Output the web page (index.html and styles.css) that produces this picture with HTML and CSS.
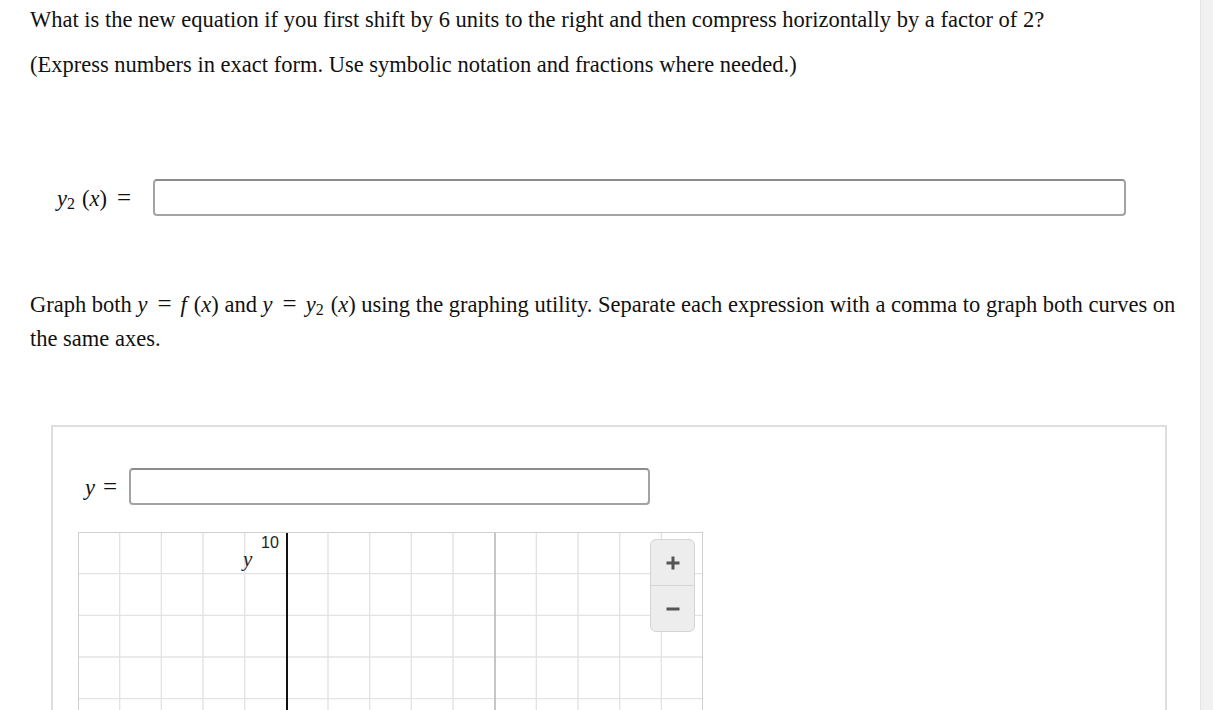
FILE: index.html
```html
<!DOCTYPE html>
<html>
<head>
<meta charset="utf-8">
<link rel="stylesheet" href="styles.css">
</head>
<body>
<div class="page">
  <main class="content">
    <p class="q1">What is the new equation if you first shift by 6 units to the right and then compress horizontally by a factor of 2?</p>
    <p class="q2">(Express numbers in exact form. Use symbolic notation and fractions where needed.)</p>

    <div class="answer-row">
      <span class="label"><i>y</i><sub>2</sub><span class="paren">(<i>x</i>)</span><span class="eq">=</span></span>
      <div class="input wide"></div>
    </div>

    <p class="graph-text">Graph both <i>y</i><span class="eq">=</span><i>f</i><span class="paren">(<i>x</i>)</span> and <i>y</i><span class="eq">=</span><i>y</i><sub>2</sub><span class="paren">(<i>x</i>)</span> using the graphing utility. Separate each expression with a comma to graph both curves on the same axes.</p>

    <section class="panel">
      <div class="y-row">
        <span class="label"><i>y</i><span class="eq">=</span></span>
        <div class="input narrow"></div>
      </div>
      <div class="graph">
        <svg class="grid" width="625" height="625" viewBox="0 0 625 625">
          <g stroke="#e3e3e3" stroke-width="1.4">
            <line x1="41.67" y1="0" x2="41.67" y2="625"/>
            <line x1="83.33" y1="0" x2="83.33" y2="625"/>
            <line x1="125" y1="0" x2="125" y2="625"/>
            <line x1="166.67" y1="0" x2="166.67" y2="625"/>
            <line x1="250" y1="0" x2="250" y2="625"/>
            <line x1="291.67" y1="0" x2="291.67" y2="625"/>
            <line x1="333.33" y1="0" x2="333.33" y2="625"/>
            <line x1="375" y1="0" x2="375" y2="625"/>
            <line x1="458.33" y1="0" x2="458.33" y2="625"/>
            <line x1="500" y1="0" x2="500" y2="625"/>
            <line x1="541.67" y1="0" x2="541.67" y2="625"/>
            <line x1="583.33" y1="0" x2="583.33" y2="625"/>
            <line x1="0" y1="41.67" x2="625" y2="41.67"/>
            <line x1="0" y1="83.33" x2="625" y2="83.33"/>
            <line x1="0" y1="125" x2="625" y2="125"/>
            <line x1="0" y1="166.67" x2="625" y2="166.67"/>
            <line x1="0" y1="208.33" x2="625" y2="208.33"/>
            <line x1="0" y1="250" x2="625" y2="250"/>
          </g>
          <line x1="417" y1="0" x2="417" y2="625" stroke="#b8b8b8" stroke-width="1.6"/>
          <line x1="209" y1="0" x2="209" y2="625" stroke="#111" stroke-width="2"/>
          <rect x="0.5" y="0.5" width="624" height="624" fill="none" stroke="#cfcfcf" stroke-width="1"/>
        </svg>
        <span class="tick">10</span>
        <span class="axis-label">y</span>
        <div class="zoom">
          <button class="zbtn plus" aria-label="zoom in">
            <svg width="16" height="16" viewBox="0 0 16 16"><path d="M8 1.5V14.5M1.5 8H14.5" stroke="#555" stroke-width="3"/></svg>
          </button>
          <button class="zbtn minus" aria-label="zoom out">
            <svg width="16" height="16" viewBox="0 0 16 16"><path d="M1.5 8H14.5" stroke="#555" stroke-width="3"/></svg>
          </button>
        </div>
      </div>
    </section>
  </main>
  <div class="scrollbar"></div>
</div>
</body>
</html>
```

FILE: styles.css
```css
html, body {
  margin: 0;
  padding: 0;
  height: 100%;
  overflow: hidden;
  background: #fff;
}

body {
  font-family: "Liberation Serif", "Times New Roman", serif;
  font-size: 22.5px;
  color: #111;
}

.page {
  display: flex;
  height: 710px;
}

.content {
  width: 1160px;
  padding-left: 30px;
  padding-right: 10px;
  flex: none;
}

.scrollbar {
  margin-left: auto;
  width: 12px;
  border-left: 1px solid #e4e4e4;
  background: #f1f1f1;
  flex: none;
}

p {
  margin: 0;
}

.q1 {
  line-height: 26px;
  padding-top: 7px;
}

.q2 {
  line-height: 26px;
  margin-top: 19px;
}

i {
  font-style: italic;
}

sub {
  font-size: 16px;
  vertical-align: -3px;
  line-height: 1;
}

.paren {
  margin-left: 7px;
}

.eq {
  margin: 0 9px 0 10px;
  font-size: 25px;
}

.answer-row {
  display: flex;
  align-items: center;
  margin-top: 101px;
  padding-left: 27px;
}

.answer-row .label {
  width: 96px;
  flex: none;
}

.input {
  height: 37px;
  box-sizing: border-box;
  border: 2px solid #a3a3a3;
  border-top-color: #8c8c8c;
  border-radius: 4px;
  background: #fff;
}

.input.wide {
  width: 973px;
}

.graph-text {
  line-height: 34px;
  margin-top: 71px;
}

.panel {
  margin-top: 69px;
  margin-left: 21px;
  width: 1116px;
  height: 400px;
  border: 2px solid #dedede;
  border-bottom: none;
  padding-top: 41px;
  padding-left: 25px;
  box-sizing: border-box;
}

.y-row {
  display: flex;
  align-items: center;
  padding-left: 7px;
}

.y-row .label {
  width: 44px;
  flex: none;
}

.y-row .eq {
  margin-left: 8px;
}

.input.narrow {
  width: 521px;
}

.graph {
  position: relative;
  margin-top: 27px;
  width: 625px;
  height: 625px;
}

.grid {
  display: block;
}

.tick {
  position: absolute;
  left: 183px;
  top: 2px;
  font-family: "Liberation Sans", Arial, sans-serif;
  font-size: 16px;
  color: #222;
}

.axis-label {
  position: absolute;
  left: 165px;
  top: 15px;
  font-family: "Liberation Serif", serif;
  font-style: italic;
  font-size: 21px;
  color: #222;
}

.zoom {
  position: absolute;
  left: 572px;
  top: 7px;
  width: 45px;
  height: 93px;
  box-sizing: border-box;
  border: 1px solid #d4d4d4;
  border-radius: 6px;
  background: #ededed;
  display: flex;
  flex-direction: column;
  overflow: hidden;
}

.zbtn {
  flex: 1;
  border: none;
  background: transparent;
  margin: 0;
  padding: 0;
  display: flex;
  align-items: center;
  justify-content: center;
}

.zbtn svg {
  display: block;
}

.zbtn.plus {
  border-bottom: 1px solid #d4d4d4;
}
```
